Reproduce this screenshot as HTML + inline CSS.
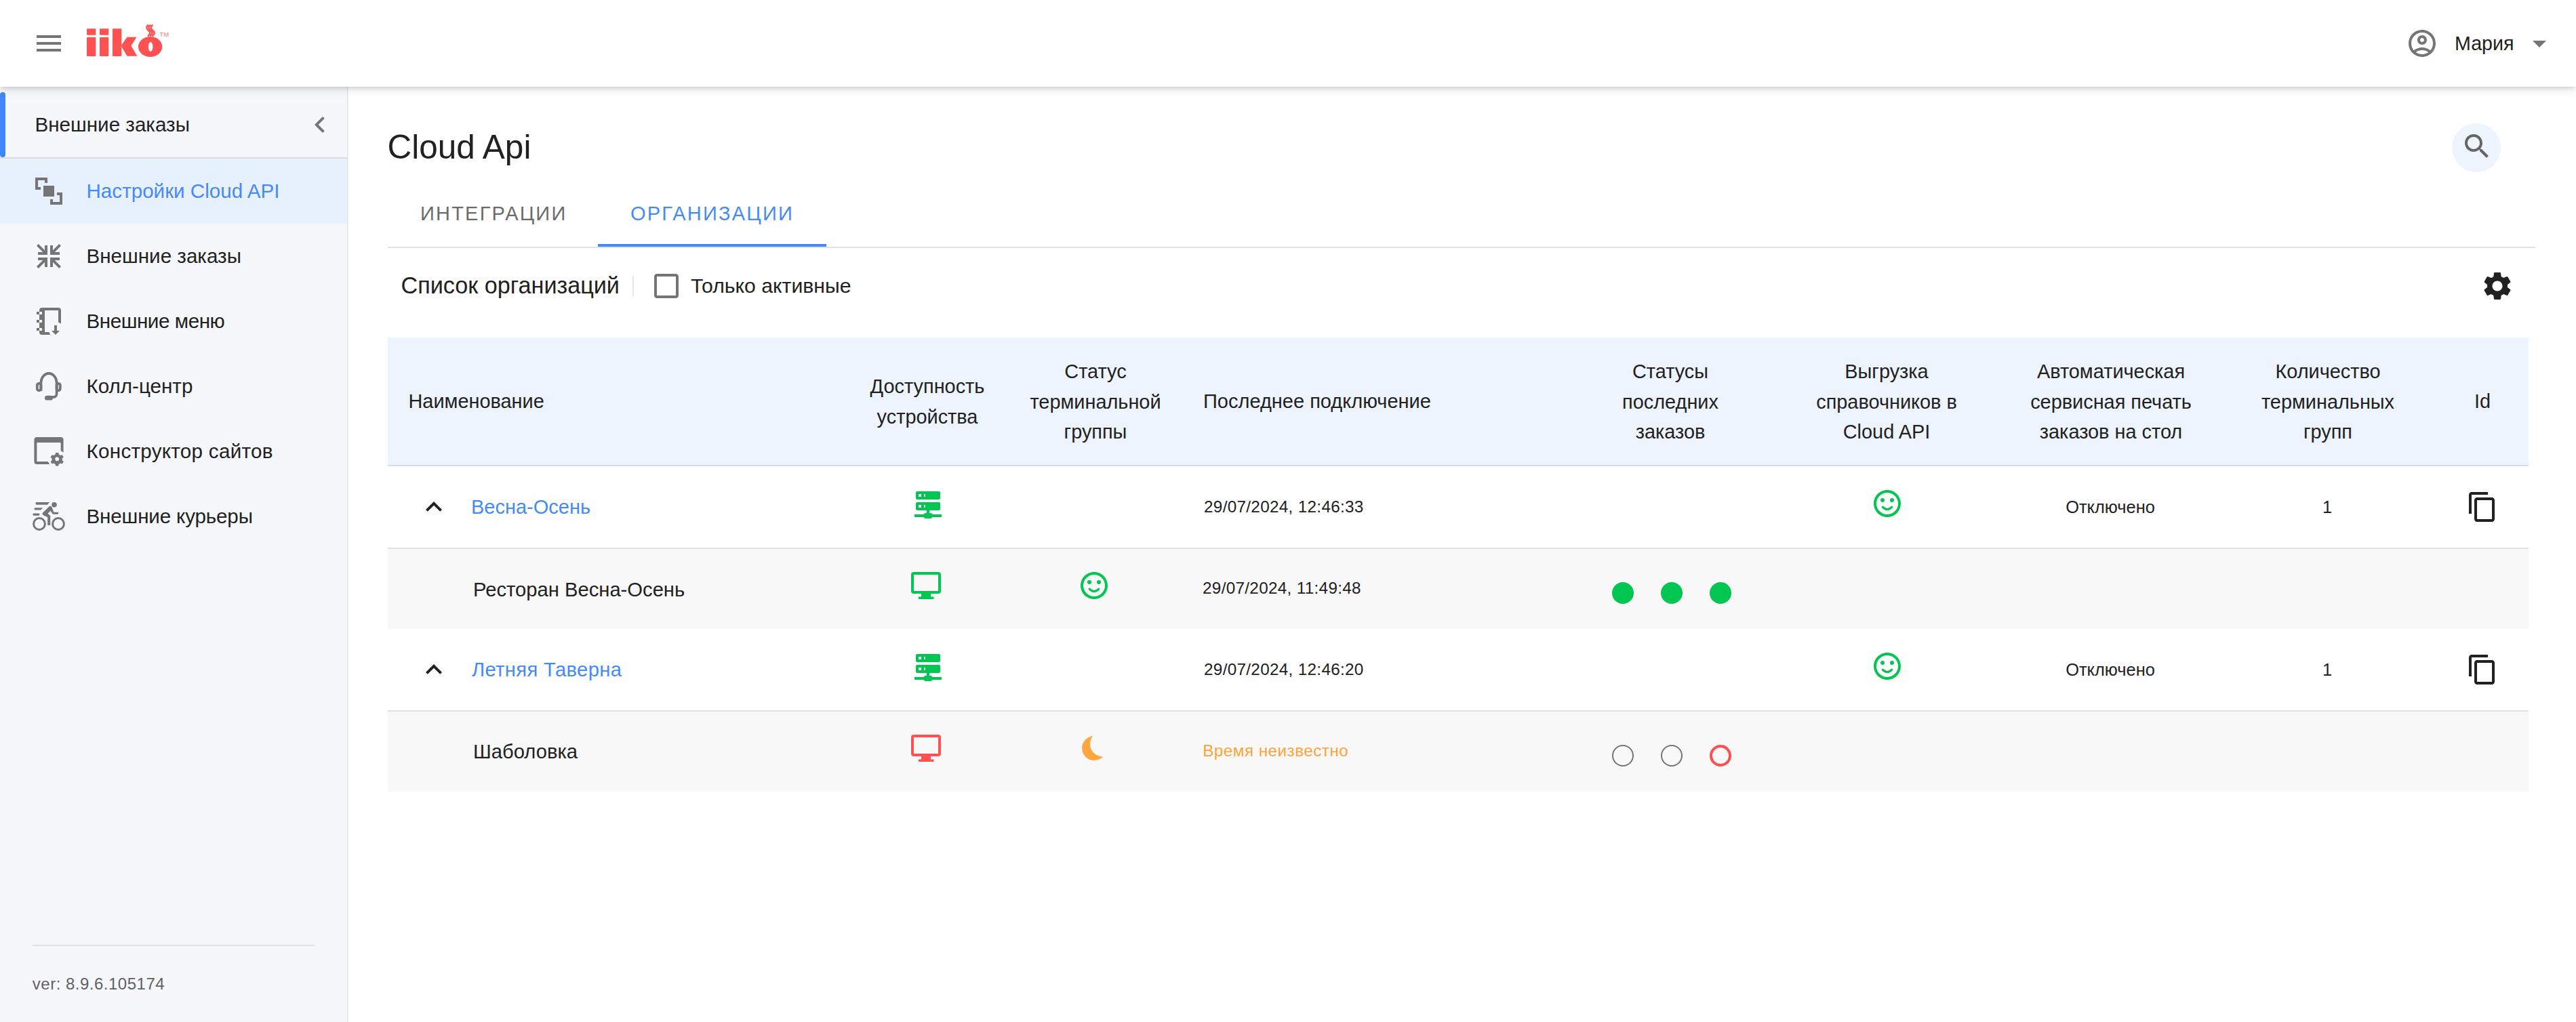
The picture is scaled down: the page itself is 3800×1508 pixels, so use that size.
<!DOCTYPE html>
<html><head><meta charset="utf-8">
<style>
*{box-sizing:border-box;margin:0;padding:0}
html,body{width:3800px;height:1508px;overflow:hidden;background:#fff;font-family:"Liberation Sans",sans-serif;color:#212121}
.a{position:absolute}
.t{position:absolute;white-space:nowrap;line-height:1}
svg{position:absolute;display:block}
#hdr{position:absolute;left:0;top:0;width:3800px;height:128px;background:#fff;z-index:5;box-shadow:0 4px 6px -2px rgba(0,0,0,.14),0 6px 14px 0 rgba(0,0,0,.08)}
#side{position:absolute;left:0;top:128px;width:512px;height:1380px;background:#f6f7fb;border-right:1px solid #e4e4e4;box-shadow:1px 0 0 #f1f1f1;box-sizing:content-box}
.gi{fill:#757575}
.blue{color:#468af6}
.th{position:absolute;text-align:center;font-size:28.9px;line-height:44.5px;white-space:nowrap}
.row{position:absolute;left:572px;width:3158px}
.dt{font-size:24.3px;letter-spacing:.3px}
</style></head><body>

<svg width="0" height="0" style="position:absolute"><defs><g id="smile"><g fill="#02c652"><circle cx="15.5" cy="9.5" r="1.5"/><circle cx="8.5" cy="9.5" r="1.5"/><path d="M12 2C6.47 2 2 6.48 2 12s4.47 10 10 10 10-4.48 10-10S17.52 2 12 2zm0 18c-4.42 0-8-3.58-8-8s3.58-8 8-8 8 3.58 8 8-3.58 8-8 8z"/></g><path d="M8.6 14.6 Q12 18 15.4 14.6" fill="none" stroke="#02c652" stroke-width="1.6" stroke-linecap="round"/></g><path id="srv" fill="#02c652" d="M13,18H14A1,1 0 0,1 15,19H22V21H15A1,1 0 0,1 14,22H10A1,1 0 0,1 9,21H2V19H9A1,1 0 0,1 10,18H11V16H4A1,1 0 0,1 3,15V11A1,1 0 0,1 4,10H20A1,1 0 0,1 21,11V15A1,1 0 0,1 20,16H13V18M4,2H20A1,1 0 0,1 21,3V7A1,1 0 0,1 20,8H4A1,1 0 0,1 3,7V3A1,1 0 0,1 4,2M9,6H10V4H9V6M9,14H10V12H9V14M5,4V6H7V4H5M5,12V14H7V12H5Z"/></defs></svg>
<!-- HEADER -->
<div id="hdr">
  <svg style="left:48px;top:40px" width="48" height="48" viewBox="0 0 24 24"><path class="gi" d="M3 18h18v-2H3v2zm0-5h18v-2H3v2zm0-7v2h18V6H3z"/></svg>
  <!-- logo -->
  <svg style="left:120px;top:30px" width="140" height="62" viewBox="120 30 140 62">
    <g fill="#fe5151">
      <rect x="128" y="42.3" width="13.3" height="9.4" rx="1"/>
      <rect x="128" y="55" width="13.3" height="28" rx="1"/>
      <rect x="147" y="42.3" width="13.3" height="9.4" rx="1"/>
      <rect x="147" y="55" width="13.3" height="28" rx="1"/>
      <rect x="166" y="42.2" width="13.3" height="40.8" rx="1"/>
      <path d="M179.3 66.2 L187.5 54.8 L201.6 54.8 L193.4 67.4 L202.4 82.8 L187.5 82.8 L179.3 68.9Z"/>
      <path fill-rule="evenodd" d="M221.6 54 a17.6 15 0 1 0 0.01 0Z M222.1 62 a3.3 7 0 1 0 0.01 0Z"/>
      
      <g fill="none" stroke="#fe5151" stroke-width="2.5" stroke-linecap="round"><path d="M218.2 37.4 C215.8 39 215.6 41.8 218.2 44.2 C221.4 46.8 223.0 49 218.8 52.6"/><path d="M221.4 37.4 C219.0 39 218.8 41.8 221.4 44.2 C224.6 46.8 226.2 49 222.0 52.6"/><path d="M224.6 37.4 C222.2 39 222.0 41.8 224.6 44.2 C227.8 46.8 229.4 49 225.2 52.6"/></g><text x="235.3" y="54.4" font-family="Liberation Sans" font-size="9.6" fill-opacity=".8">TM</text>
    </g>
    
  </svg>
  <svg style="left:3549px;top:40px" width="48" height="48" viewBox="0 0 24 24"><path class="gi" d="M12 2C6.48 2 2 6.48 2 12s4.48 10 10 10 10-4.48 10-10S17.52 2 12 2zM7.35 18.5C8.66 17.56 10.26 17 12 17s3.34.56 4.65 1.5c-1.31.94-2.91 1.5-4.65 1.5s-3.34-.56-4.65-1.5zm10.79-1.38C16.45 15.8 14.32 15 12 15s-4.45.8-6.14 2.12C4.7 15.73 4 13.95 4 12c0-4.42 3.58-8 8-8s8 3.58 8 8c0 1.95-.7 3.73-1.86 5.12z"/><path class="gi" d="M12 6c-1.93 0-3.5 1.57-3.5 3.5S10.07 13 12 13s3.5-1.57 3.5-3.5S13.93 6 12 6zm0 5c-.83 0-1.5-.67-1.5-1.5S11.17 8 12 8s1.5.67 1.5 1.5S12.83 11 12 11z"/></svg>
  <div class="t" style="left:3621px;top:49.5px;font-size:28.6px">Мария</div>
  <svg style="left:3722px;top:40px" width="48" height="48" viewBox="0 0 24 24"><path class="gi" d="M7 10l5 5 5-5z"/></svg>
</div>

<!-- SIDEBAR -->
<div id="side"></div>
<div class="a" style="left:0;top:136px;width:8px;height:96px;background:#3f87f6;border-radius:4px"></div>
<div class="a" style="left:0;top:232px;width:512px;height:2px;background:#dcdcdc"></div>
<div class="t" style="left:51.5px;top:169px;font-size:29.6px">Внешние заказы</div>
<svg style="left:448px;top:160px" width="48" height="48" viewBox="0 0 24 24"><path class="gi" d="M15.41 7.41L14 6l-6 6 6 6 1.41-1.41L10.83 12z"/></svg>

<div class="a" style="left:0;top:234px;width:512px;height:96px;background:#e7f0fd"></div>
<!-- icon 1 -->
<svg style="left:48px;top:258px" width="48" height="48" viewBox="0 0 24 24"><path class="gi" d="M2 2h9v4H9V4H4v5h2v2H2z M8 8h8v8H8z M22 22h-9v-4h2v2h5v-5h-2v-2h4z"/></svg>
<div class="t blue" style="left:127.5px;top:267px;font-size:29.6px">Настройки Cloud API</div>
<!-- icon 2 -->
<svg style="left:48px;top:354px" width="48" height="48" viewBox="0 0 24 24"><path class="gi" d="M11 4H9v3.6L4.4 3 3 4.4 7.6 9H4v2h7z M13 4h2v3.6L19.6 3 21 4.4 16.4 9H20v2h-7z M11 20H9v-3.6L4.4 21 3 19.6 7.6 15H4v-2h7z M13 20h2v-3.6l4.6 4.6 1.4-1.4-4.6-4.6H20v-2h-7z"/></svg>
<div class="t" style="left:127.5px;top:363px;font-size:29.6px">Внешние заказы</div>
<!-- icon 3 -->
<svg style="left:48px;top:450px" width="48" height="48" viewBox="0 0 24 24"><path class="gi" d="M7 2h12a2 2 0 0 1 2 2v9.8l-2-1V4h-10v16h3.2l.8 2H7a2 2 0 0 1-2-2V4a2 2 0 0 1 2-2z M3 5h2v2H3z M3 11h2v2H3z M3 17h2v2H3z M16 15h2v4h2l-3 3-3-3h2z"/><path fill="#f6f7fb" d="M5 5h2v2H5z M5 11h2v2H5z M5 17h2v2H5z"/></svg>
<div class="t" style="left:127.5px;top:459px;font-size:29.6px;letter-spacing:-0.45px">Внешние меню</div>
<!-- icon 4 headset -->
<svg style="left:48px;top:546px" width="48" height="48" viewBox="0 0 24 24"><g fill="none" stroke="#757575" stroke-width="1.9"><path d="M6.2 15.5V9.5a5.8 7 0 0 1 11.6 0V17.5a2.5 2.5 0 0 1-2.5 2.5H13"/><rect x="3.4" y="9.9" width="2.8" height="5.2" rx="1.3"/><rect x="17.8" y="9.9" width="2.6" height="5.2" rx="1.3"/></g><rect class="gi" x="9" y="18.9" width="6" height="3.4" rx="1.7"/></svg>
<div class="t" style="left:127.5px;top:555px;font-size:29.6px">Колл-центр</div>
<!-- icon 5 site -->
<svg style="left:48px;top:642px" width="48" height="48" viewBox="0 0 24 24"><path class="gi" d="M3.2 1.5h17.6a2 2 0 0 1 2 2v9.2l-2-1.2V5.5h-17.6v14h8.2l1.2 2H3.2a2 2 0 0 1-2-2v-16a2 2 0 0 1 2-2z"/><path class="gi" transform="translate(18.1 17.6)" d="M-1 -4.6h2l.3 1.3 1.2.7 1.3-.4 1 1.7-1 .9v1.4l1 .9-1 1.7-1.3-.4-1.2.7-.3 1.3h-2l-.3-1.3-1.2-.7-1.3.4-1-1.7 1-.9v-1.4l-1-.9 1-1.7 1.3.4 1.2-.7z M0 -1.5a1.5 1.5 0 1 0 .01 0z" fill-rule="evenodd"/></svg>
<div class="t" style="left:127.5px;top:651px;font-size:29.6px;letter-spacing:0.28px">Конструктор сайтов</div>
<!-- icon 6 bike -->
<svg style="left:48px;top:738px" width="48" height="48" viewBox="0 0 24 24"><g class="gi"><path d="M3 1.5h9.6l-1.6 1.85H3a.93.93 0 0 1 0-1.85z M2.1 5.6h5.5l-1.6 1.7H2.1a.85.85 0 0 1 0-1.7z M1 9.7h4.1v1.7H1a.85.85 0 0 1 0-1.7z"/><circle cx="16" cy="3.35" r="1.9"/><path d="M7.1 9.7 L12.2 4.7 a1.3 1.3 0 0 1 2 .3 L15.6 8.85 H19 V10.4 H15 L13.2 7.9 L11.2 9.9 L13.1 11.5 V18.45 H11.1 V12.6 L7.8 11Z"/></g><g fill="none" stroke="#757575" stroke-width="1.5"><circle cx="5" cy="17.5" r="4.2"/><circle cx="19" cy="17.5" r="4.2"/></g></svg>
<div class="t" style="left:127.5px;top:747px;font-size:29.6px;letter-spacing:-0.16px">Внешние курьеры</div>

<div class="a" style="left:48px;top:1394px;width:416px;height:2px;background:#dfe0e0"></div>
<div class="t" style="left:47.8px;top:1440.3px;font-size:24px;letter-spacing:.5px;color:#616161">ver: 8.9.6.105174</div>

<!-- MAIN -->
<div class="t" style="left:571.5px;top:191.8px;font-size:49.5px">Cloud Api</div>
<div class="a" style="left:3617px;top:182px;width:72px;height:72px;border-radius:50%;background:#edf4fe"></div>
<svg style="left:3630px;top:192px" width="48" height="48" viewBox="0 0 24 24"><path fill="#656565" d="M15.5 14h-.79l-.28-.27C15.41 12.59 16 11.11 16 9.5 16 5.91 13.09 3 9.5 3S3 5.91 3 9.5 5.91 16 9.5 16c1.61 0 3.09-.59 4.23-1.57l.27.28v.79l5 4.99L20.49 19l-4.99-5zm-6 0C7.01 14 5 11.99 5 9.5S7.01 5 9.5 5 14 7.01 14 9.5 11.99 14 9.5 14z"/></svg>

<div class="t" style="left:620px;top:301px;font-size:29px;letter-spacing:2.2px;color:#6b6b6b">ИНТЕГРАЦИИ</div>
<div class="t blue" style="left:930px;top:301px;font-size:29px;letter-spacing:2.2px">ОРГАНИЗАЦИИ</div>
<div class="a" style="left:572px;top:364px;width:3168px;height:2px;background:#e2e2e2"></div>
<div class="a" style="left:882px;top:360px;width:337px;height:4px;background:#468af6"></div>

<div class="t" style="left:591.5px;top:404px;font-size:34.2px">Список организаций</div>
<div class="a" style="left:933px;top:407px;width:2px;height:30px;background:#e6e6e6"></div>
<svg style="left:959px;top:398px" width="48" height="48" viewBox="0 0 24 24"><path class="gi" d="M19 5v14H5V5h14m0-2H5c-1.11 0-2 .9-2 2v14c0 1.1.89 2 2 2h14c1.1 0 2-.9 2-2V5c0-1.1-.9-2-2-2z"/></svg>
<div class="t" style="left:1019px;top:407px;font-size:30.2px">Только активные</div>
<svg style="left:3659px;top:396.5px" width="50" height="50" viewBox="0 0 24 24"><path fill="#212121" d="M19.14 12.94c.04-.3.06-.61.06-.94 0-.32-.02-.64-.07-.94l2.03-1.58c.18-.14.23-.41.12-.61l-1.92-3.32c-.12-.22-.37-.29-.59-.22l-2.39.96c-.5-.38-1.03-.7-1.62-.94l-.36-2.54c-.04-.24-.24-.41-.48-.41h-3.84c-.24 0-.43.17-.47.41l-.36 2.54c-.59.24-1.13.57-1.62.94l-2.39-.96c-.22-.08-.47 0-.59.22L2.74 8.87c-.12.21-.08.47.12.61l2.03 1.58c-.05.3-.09.63-.09.94s.02.64.07.94l-2.03 1.58c-.18.14-.23.41-.12.61l1.92 3.32c.12.22.37.29.59.22l2.39-.96c.5.38 1.03.7 1.62.94l.36 2.54c.05.24.24.41.48.41h3.84c.24 0 .44-.17.47-.41l.36-2.54c.59-.24 1.13-.56 1.62-.94l2.39.96c.22.08.47 0 .59-.22l1.92-3.32c.12-.22.07-.47-.12-.61l-2.01-1.58zM12 15.6c-1.98 0-3.6-1.62-3.6-3.6s1.62-3.6 3.6-3.6 3.6 1.62 3.6 3.6-1.62 3.6-3.6 3.6z"/></svg>

<!-- TABLE HEADER -->
<div class="row" style="top:498px;height:188px;background:#eef4fe"></div>
<div class="row" style="top:686px;height:2px;background:#d6dce6"></div>
<div class="th" style="left:602.5px;top:570px;text-align:left">Наименование</div>
<div class="th" style="left:1268px;width:200px;top:548px">Доступность<br>устройства</div>
<div class="th" style="left:1516px;width:200px;top:526px">Статус<br>терминальной<br>группы</div>
<div class="th" style="left:1775px;top:570px;text-align:left;font-size:29px">Последнее подключение</div>
<div class="th" style="left:2364px;width:200px;top:526px">Статусы<br>последних<br>заказов</div>
<div class="th" style="left:2663px;width:240px;top:526px">Выгрузка<br>справочников в<br>Cloud API</div>
<div class="th" style="left:2984px;width:260px;top:526px">Автоматическая<br>сервисная печать<br>заказов на стол</div>
<div class="th" style="left:3314px;width:240px;top:526px">Количество<br>терминальных<br>групп</div>
<div class="th" style="left:3612px;width:100px;top:570px">Id</div>

<!-- ROWS -->
<div class="row" style="top:688px;height:120px;background:#fefefe"></div>
<div class="row" style="top:808px;height:2px;background:#e0e0e0"></div>
<div class="row" style="top:810px;height:118px;background:#f8f8f8"></div>
<div class="row" style="top:928px;height:120px;background:#fefefe"></div>
<div class="row" style="top:1048px;height:2px;background:#e0e0e0"></div>
<div class="row" style="top:1050px;height:118px;background:#f8f8f8"></div>

<!-- row 1 -->
<svg style="left:616px;top:724px" width="48" height="48" viewBox="0 0 24 24"><path fill="#212121" d="M12 8l-6 6 1.41 1.41L12 10.83l4.59 4.58L18 14z"/></svg>
<div class="t blue" style="left:695px;top:734px;font-size:29px">Весна-Осень</div>
<svg style="left:1345px;top:721px" width="48" height="48" viewBox="0 0 24 24"><path fill="#02c652" d="M13,18H14A1,1 0 0,1 15,19H22V21H15A1,1 0 0,1 14,22H10A1,1 0 0,1 9,21H2V19H9A1,1 0 0,1 10,18H11V16H4A1,1 0 0,1 3,15V11A1,1 0 0,1 4,10H20A1,1 0 0,1 21,11V15A1,1 0 0,1 20,16H13V18M4,2H20A1,1 0 0,1 21,3V7A1,1 0 0,1 20,8H4A1,1 0 0,1 3,7V3A1,1 0 0,1 4,2M9,6H10V4H9V6M9,14H10V12H9V14M5,4V6H7V4H5M5,12V14H7V12H5Z"/></svg>
<div class="t dt" style="left:1776px;top:735.5px">29/07/2024, 12:46:33</div>
<svg style="left:2760px;top:719px" width="48" height="48" viewBox="0 0 24 24"><use href="#smile"/></svg>
<div class="th" style="left:3013px;width:200px;top:732.5px;font-size:25.4px;line-height:30px">Отключено</div>
<div class="th" style="left:3383px;width:100px;top:732.5px;font-size:25.4px;line-height:30px">1</div>
<svg style="left:3638px;top:724px" width="48" height="48" viewBox="0 0 24 24"><path fill="#212121" d="M16 1H4c-1.1 0-2 .9-2 2v14h2V3h12V1zm3 4H8c-1.1 0-2 .9-2 2v14c0 1.1.9 2 2 2h11c1.1 0 2-.9 2-2V7c0-1.1-.9-2-2-2zm0 16H8V7h11v14z"/></svg>

<!-- row 2 -->
<div class="t" style="left:698px;top:856px;font-size:29.2px">Ресторан Весна-Осень</div>
<svg style="left:1342px;top:840px" width="48" height="48" viewBox="0 0 24 24"><path fill="#02c652" fill-rule="evenodd" d="M3 2h18a2 2 0 0 1 2 2v12a2 2 0 0 1-2 2h-5.5v2.2h2.2V22H6.5v-1.8h2V18H3a2 2 0 0 1-2-2V4a2 2 0 0 1 2-2z M3 4v12h18V4z"/></svg>
<svg style="left:1590px;top:840px" width="48" height="48" viewBox="0 0 24 24"><use href="#smile"/></svg>
<div class="t dt" style="left:1774px;top:856.4px">29/07/2024, 11:49:48</div>
<div class="a" style="left:2378px;top:859px;width:32px;height:32px;border-radius:50%;background:#02c652"></div>
<div class="a" style="left:2450px;top:859px;width:32px;height:32px;border-radius:50%;background:#02c652"></div>
<div class="a" style="left:2522px;top:859px;width:32px;height:32px;border-radius:50%;background:#02c652"></div>

<!-- row 3 -->
<svg style="left:616px;top:964px" width="48" height="48" viewBox="0 0 24 24"><path fill="#212121" d="M12 8l-6 6 1.41 1.41L12 10.83l4.59 4.58L18 14z"/></svg>
<div class="t blue" style="left:696px;top:974px;font-size:29.2px;letter-spacing:.35px">Летняя Таверна</div>
<svg style="left:1345px;top:961px" width="48" height="48" viewBox="0 0 24 24"><path fill="#02c652" d="M13,18H14A1,1 0 0,1 15,19H22V21H15A1,1 0 0,1 14,22H10A1,1 0 0,1 9,21H2V19H9A1,1 0 0,1 10,18H11V16H4A1,1 0 0,1 3,15V11A1,1 0 0,1 4,10H20A1,1 0 0,1 21,11V15A1,1 0 0,1 20,16H13V18M4,2H20A1,1 0 0,1 21,3V7A1,1 0 0,1 20,8H4A1,1 0 0,1 3,7V3A1,1 0 0,1 4,2M9,6H10V4H9V6M9,14H10V12H9V14M5,4V6H7V4H5M5,12V14H7V12H5Z"/></svg>
<div class="t dt" style="left:1776px;top:975.5px">29/07/2024, 12:46:20</div>
<svg style="left:2760px;top:958.5px" width="48" height="48" viewBox="0 0 24 24"><use href="#smile"/></svg>
<div class="th" style="left:3013px;width:200px;top:972.5px;font-size:25.4px;line-height:30px">Отключено</div>
<div class="th" style="left:3383px;width:100px;top:972.5px;font-size:25.4px;line-height:30px">1</div>
<svg style="left:3638px;top:964px" width="48" height="48" viewBox="0 0 24 24"><path fill="#212121" d="M16 1H4c-1.1 0-2 .9-2 2v14h2V3h12V1zm3 4H8c-1.1 0-2 .9-2 2v14c0 1.1.9 2 2 2h11c1.1 0 2-.9 2-2V7c0-1.1-.9-2-2-2zm0 16H8V7h11v14z"/></svg>

<!-- row 4 -->
<div class="t" style="left:698px;top:1095px;font-size:29.2px">Шаболовка</div>
<svg style="left:1342px;top:1080px" width="48" height="48" viewBox="0 0 24 24"><path fill="#fe5252" fill-rule="evenodd" d="M3 2h18a2 2 0 0 1 2 2v12a2 2 0 0 1-2 2h-5.5v2.2h2.2V22H6.5v-1.8h2V18H3a2 2 0 0 1-2-2V4a2 2 0 0 1 2-2z M3 4v12h18V4z"/></svg>
<svg style="left:1590px;top:1080px" width="44" height="46" viewBox="0 0 44 46"><path fill="#ffa640" d="M22.2 5.75 C13 7.5 6.1 14.5 6.1 23.6 C6.1 33.8 14 42 22.9 42 C28.8 42 34 39.8 37.3 36.6 C27 36.5 18.1 28.5 18.1 18.8 C18.1 13.5 19.5 9 22.2 5.75 Z"/></svg>
<div class="t dt" style="left:1774.2px;top:1096px;color:#fca43a;letter-spacing:.45px">Время неизвестно</div>
<div class="a" style="left:2378px;top:1099px;width:32px;height:32px;border-radius:50%;border:2px solid #757575"></div>
<div class="a" style="left:2450px;top:1099px;width:32px;height:32px;border-radius:50%;border:2px solid #757575"></div>
<div class="a" style="left:2522px;top:1099px;width:32px;height:32px;border-radius:50%;border:4px solid #fe4f4f"></div>

</body></html>
